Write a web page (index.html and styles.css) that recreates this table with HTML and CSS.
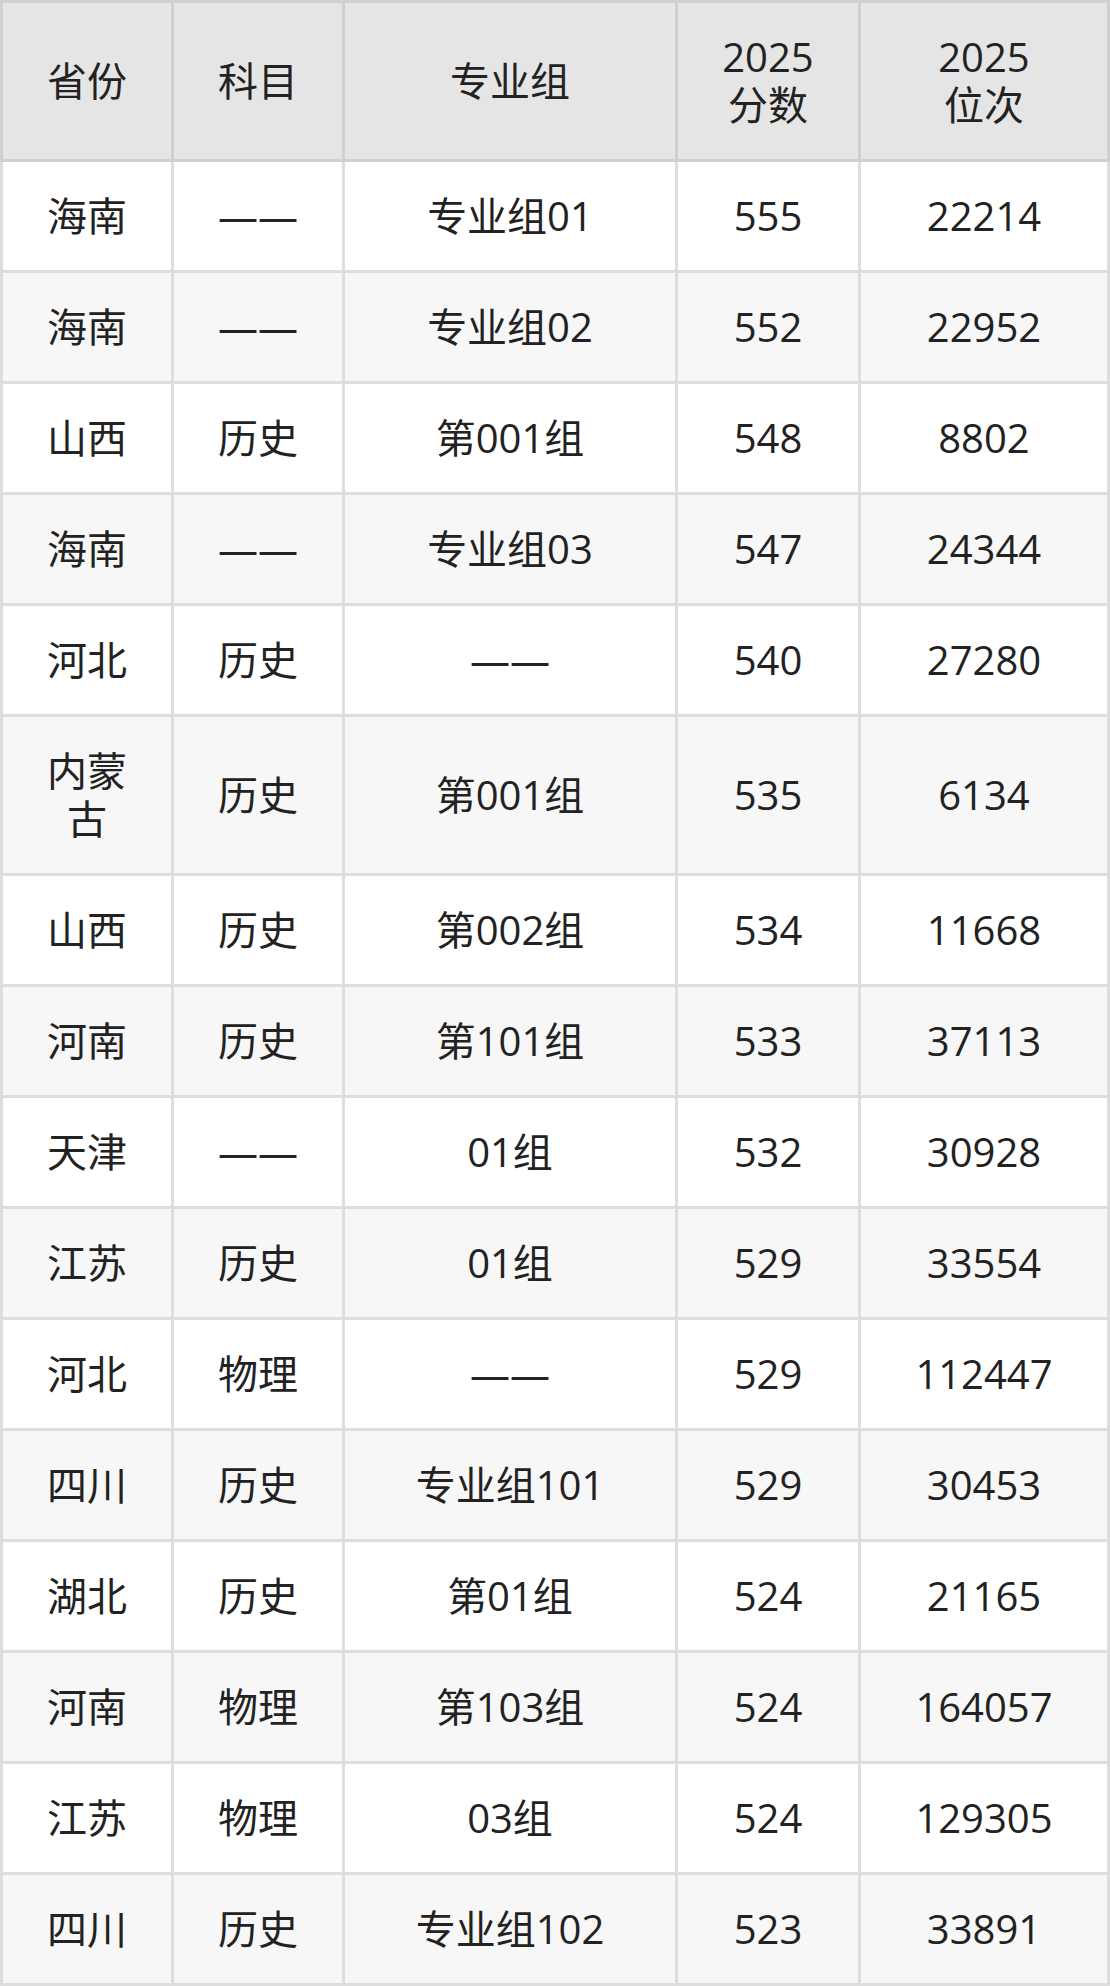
FILE: index.html
```html
<!DOCTYPE html>
<html lang="zh-CN">
<head>
<meta charset="utf-8">
<title>分数位次</title>
<link rel="stylesheet" href="styles.css">
</head>
<body>
<table class="score-table">
  <colgroup>
    <col class="c1"><col class="c2"><col class="c3"><col class="c4"><col class="c5">
  </colgroup>
  <thead>
    <tr><th>省份</th><th>科目</th><th>专业组</th><th>2025<br>分数</th><th>2025<br>位次</th></tr>
  </thead>
  <tbody>
    <tr><td>海南</td><td>——</td><td>专业组01</td><td>555</td><td>22214</td></tr>
    <tr><td>海南</td><td>——</td><td>专业组02</td><td>552</td><td>22952</td></tr>
    <tr><td>山西</td><td>历史</td><td>第001组</td><td>548</td><td>8802</td></tr>
    <tr><td>海南</td><td>——</td><td>专业组03</td><td>547</td><td>24344</td></tr>
    <tr><td>河北</td><td>历史</td><td>——</td><td>540</td><td>27280</td></tr>
    <tr><td>内蒙古</td><td>历史</td><td>第001组</td><td>535</td><td>6134</td></tr>
    <tr><td>山西</td><td>历史</td><td>第002组</td><td>534</td><td>11668</td></tr>
    <tr><td>河南</td><td>历史</td><td>第101组</td><td>533</td><td>37113</td></tr>
    <tr><td>天津</td><td>——</td><td>01组</td><td>532</td><td>30928</td></tr>
    <tr><td>江苏</td><td>历史</td><td>01组</td><td>529</td><td>33554</td></tr>
    <tr><td>河北</td><td>物理</td><td>——</td><td>529</td><td>112447</td></tr>
    <tr><td>四川</td><td>历史</td><td>专业组101</td><td>529</td><td>30453</td></tr>
    <tr><td>湖北</td><td>历史</td><td>第01组</td><td>524</td><td>21165</td></tr>
    <tr><td>河南</td><td>物理</td><td>第103组</td><td>524</td><td>164057</td></tr>
    <tr><td>江苏</td><td>物理</td><td>03组</td><td>524</td><td>129305</td></tr>
    <tr><td>四川</td><td>历史</td><td>专业组102</td><td>523</td><td>33891</td></tr>
  </tbody>
</table>
</body>
</html>
```
FILE: styles.css
```css
html, body {
  margin: 0;
  padding: 0;
  background: #ffffff;
}

.score-table {
  width: 1110px;
  table-layout: fixed;
  border-collapse: collapse;
  font-family: "Open Sans", "Noto Sans CJK SC", sans-serif;
  font-size: 40px;
  line-height: 48px;
  color: #222222;
}

.c1 { width: 171px; }
.c2 { width: 171px; }
.c3 { width: 333px; }
.c4 { width: 183px; }
.c5 { width: 249px; }

.score-table th,
.score-table td {
  padding: 30px 30px;
  text-align: center;
  vertical-align: middle;
  font-weight: normal;
}

.score-table th {
  background: #e5e5e5;
  border: 3px solid #d0d0d0;
}

.score-table td {
  border: 3px solid #dddddd;
  background: #ffffff;
}

.score-table tbody tr:nth-child(even) td {
  background: #f7f7f7;
}
```
